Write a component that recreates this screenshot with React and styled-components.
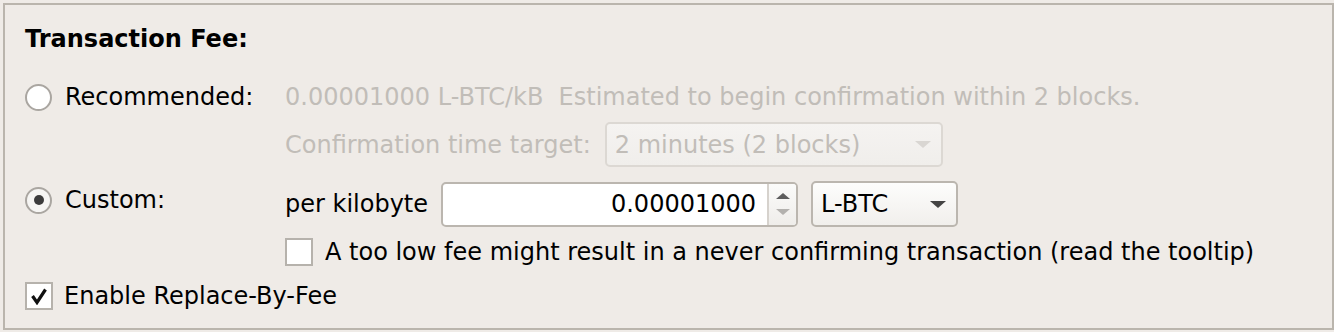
import React from "react";
import styled, { createGlobalStyle } from "styled-components";

const GlobalStyle = createGlobalStyle`
  html, body {
    margin: 0;
    padding: 0;
    background: #efebe7;
  }
  body {
    font-family: "DejaVu Sans", "Liberation Sans", sans-serif;
    font-size: 24px;
    color: #000;
  }
`;

const GroupBox = styled.fieldset`
  box-sizing: border-box;
  margin: 3px 0 0 3px;
  width: 1331px;
  height: 327px;
  border: 2px solid #bab5ad;
  padding: 0 20px;
  display: flex;
  flex-direction: column;
  min-width: 0;
`;

const Title = styled.div`
  margin-top: 20px;
  height: 28px;
  line-height: 28px;
  font-weight: bold;
`;

const Row = styled.div`
  display: flex;
  align-items: center;
  height: ${({ $h }) => $h}px;
  margin-top: ${({ $mt }) => $mt}px;
`;

const LeftCell = styled.div`
  width: 260px;
  flex: none;
  display: flex;
  align-items: center;
  gap: ${({ $gap = 13 }) => $gap}px;
  align-self: stretch;
  margin-top: ${({ $up = 0 }) => -$up * 2}px;
`;

const Cell = styled.div`
  display: flex;
  align-items: center;
  gap: ${({ $gap = 13 }) => $gap}px;
`;

const Label = styled.span`
  white-space: pre;
  color: ${({ $disabled }) => ($disabled ? "#c1bdb8" : "#000")};
`;

const Radio = styled.span`
  box-sizing: border-box;
  width: 27px;
  height: 27px;
  border-radius: 50%;
  border: 2px solid #aaa6a1;
  background: ${({ $checked }) => ($checked ? "#f6f5f3" : "#fff")};
  display: flex;
  align-items: center;
  justify-content: center;
  flex: none;
  &::after {
    content: "";
    display: ${({ $checked }) => ($checked ? "block" : "none")};
    width: 10px;
    height: 10px;
    border-radius: 50%;
    background: #3c3c3c;
  }
`;

const CheckBox = styled.span`
  box-sizing: border-box;
  width: 28px;
  height: 28px;
  border: 2px solid #b6b2ac;
  background: #fff;
  display: flex;
  align-items: center;
  justify-content: center;
  flex: none;
`;

const Combo = styled.div`
  box-sizing: border-box;
  width: ${({ $w }) => $w}px;
  height: ${({ $h = 46 }) => $h}px;
  border: 2px solid ${({ $disabled }) => ($disabled ? "#dcd8d3" : "#bbb6af")};
  border-radius: 5px;
  background: ${({ $disabled }) =>
    $disabled
      ? "linear-gradient(#f5f3f1, #f0eeeb)"
      : "linear-gradient(#fdfdfc, #f1efec)"};
  display: flex;
  align-items: center;
  justify-content: space-between;
  padding: 0 10px 0 8px;
  color: ${({ $disabled }) => ($disabled ? "#c1bdb8" : "#000")};
`;

const Arrow = styled.span`
  width: 0;
  height: 0;
  border-left: 8px solid transparent;
  border-right: 8px solid transparent;
  border-top: 7px solid ${({ $color }) => $color};
`;

const SpinBox = styled.div`
  box-sizing: border-box;
  width: 357px;
  height: 45px;
  border: 2px solid #bbb6af;
  border-radius: 5px;
  background: #fff;
  display: flex;
  overflow: hidden;
`;

const SpinValue = styled.div`
  flex: 1;
  display: flex;
  align-items: center;
  justify-content: flex-end;
  padding-right: 11px;
`;

const SpinButtons = styled.div`
  width: 27px;
  border-left: 2px solid #d6d2cd;
  background: linear-gradient(#fbfbfa, #efedea);
  display: flex;
  flex-direction: column;
  align-items: center;
  justify-content: space-between;
  padding: 9px 0 10px;
`;

const SpinArrow = styled.span`
  width: 0;
  height: 0;
  border-left: 7px solid transparent;
  border-right: 7px solid transparent;
  ${({ $up, $color }) =>
    $up
      ? `border-bottom: 6px solid ${$color};`
      : `border-top: 6px solid ${$color};`}
`;

const Check = () => (
  <svg width="18" height="18" viewBox="0 0 18 18">
    <path
      d="M2.5 9 L7 15.5 L15.5 2.5"
      fill="none"
      stroke="#111"
      strokeWidth="3.2"
      strokeLinejoin="miter"
    />
  </svg>
);

export default function App() {
  return (
    <>
      <GlobalStyle />
      <GroupBox>
        <Title>Transaction Fee:</Title>

        <Row $h={46} $mt={21}>
          <LeftCell>
            <Radio />
            <Label>Recommended:</Label>
          </LeftCell>
          <Cell>
            <Label $disabled>
              {"0.00001000 L-BTC/kB  Estimated to begin confirmation within 2 blocks."}
            </Label>
          </Cell>
        </Row>

        <Row $h={45} $mt={2}>
          <LeftCell />
          <Cell $gap={14}>
            <Label $disabled>Confirmation time target:</Label>
            <Combo $w={338} $h={45} $disabled>
              <span>2 minutes (2 blocks)</span>
              <Arrow $color="#d9d6d2" />
            </Combo>
          </Cell>
        </Row>

        <Row $h={46} $mt={14}>
          <LeftCell $up={4}>
            <Radio $checked />
            <Label>Custom:</Label>
          </LeftCell>
          <Cell>
            <Label>per kilobyte</Label>
            <SpinBox>
              <SpinValue>0.00001000</SpinValue>
              <SpinButtons>
                <SpinArrow $up $color="#5e5e5e" />
                <SpinArrow $color="#b3b1ae" />
              </SpinButtons>
            </SpinBox>
            <Combo $w={147}>
              <span>L-BTC</span>
              <Arrow $color="#444" />
            </Combo>
          </Cell>
        </Row>

        <Row $h={28} $mt={11}>
          <LeftCell $gap={11} />
          <Cell $gap={12}>
            <CheckBox />
            <Label>
              A too low fee might result in a never confirming transaction (read the tooltip)
            </Label>
          </Cell>
        </Row>

        <Row $h={28} $mt={16}>
          <LeftCell $gap={11}>
            <CheckBox>
              <Check />
            </CheckBox>
            <Label>Enable Replace-By-Fee</Label>
          </LeftCell>
        </Row>
      </GroupBox>
    </>
  );
}
